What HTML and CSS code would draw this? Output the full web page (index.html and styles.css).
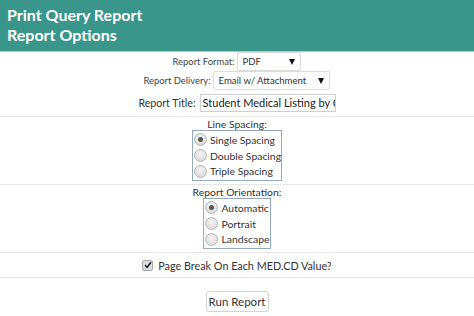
FILE: index.html
```html
<!DOCTYPE html>
<html>
<head>
<meta charset="utf-8">
<link rel="stylesheet" href="styles.css">
</head>
<body>
<header class="title-bar">
  <div>Print Query Report</div>
  <div>Report Options</div>
</header>

<section class="options">
  <div class="row">
    <label class="lbl">Report Format:</label>
    <span class="select w-format">PDF<span class="arrow"></span></span>
  </div>
  <div class="row">
    <label class="lbl">Report Delivery:</label>
    <span class="select w-delivery">Email w/ Attachment<span class="arrow"></span></span>
  </div>
  <div class="row row-title">
    <label class="lbl lbl-big">Report Title:</label>
    <span class="text-input">Student Medical Listing by Code</span>
  </div>
</section>

<section class="group">
  <div class="caption">Line Spacing:</div>
  <div class="box">
    <div class="opt"><span class="radio on"></span>Single Spacing</div>
    <div class="opt"><span class="radio"></span>Double Spacing</div>
    <div class="opt"><span class="radio"></span>Triple Spacing</div>
  </div>
</section>

<section class="group">
  <div class="caption">Report Orientation:</div>
  <div class="box">
    <div class="opt"><span class="radio on"></span>Automatic</div>
    <div class="opt"><span class="radio"></span>Portrait</div>
    <div class="opt"><span class="radio"></span>Landscape</div>
  </div>
</section>

<section class="check-row">
  <span class="check"><svg viewBox="0 0 10 10" width="8" height="8"><path d="M1.3 5.2 L3.8 7.8 L8.8 1.6" fill="none" stroke="#222" stroke-width="2"/></svg></span>
  <span>Page Break On Each MED.CD Value?</span>
</section>

<section class="actions">
  <button class="btn">Run Report</button>
</section>
</body>
</html>
```

FILE: styles.css
```css
html, body {
  margin: 0;
  padding: 0;
  background: #fff;
}
body {
  font-family: "Lato", "Open Sans", sans-serif;
  color: #333;
  font-size: 11px;
}
.title-bar {
  background: #3a958b;
  color: #fff;
  font-weight: bold;
  font-size: 16px;
  line-height: 20px;
  height: 52px;
  box-sizing: border-box;
  padding: 5px 7px 0;
  border-bottom: 1px solid #b9c4c3;
}
.options {
  display: flex;
  flex-direction: column;
  align-items: center;
  padding-bottom: 4px;
  border-bottom: 1px solid #e6e6e6;
}
.row {
  display: flex;
  align-items: center;
  height: 19px;
}
.row-title {
  margin-top: 4px;
  height: 18px;
}
.lbl {
  font-size: 9.4px;
  color: #444;
  margin-right: 3px;
}
.lbl-big {
  font-size: 10.6px;
  color: #333;
  margin-right: 4px;
}
.select {
  position: relative;
  display: flex;
  align-items: center;
  box-sizing: border-box;
  height: 19px;
  border: 1px solid #dcdcdc;
  border-radius: 2px;
  padding-left: 4px;
  font-size: 9.6px;
  color: #333;
  background: #fff;
}
.w-format { width: 64px; }
.w-delivery { width: 117px; }
.arrow {
  position: absolute;
  right: 5px;
  top: 6px;
  width: 0;
  height: 0;
  border-left: 3.5px solid transparent;
  border-right: 3.5px solid transparent;
  border-top: 6px solid #111;
}
.text-input {
  display: block;
  box-sizing: border-box;
  width: 136px;
  height: 18px;
  line-height: 16px;
  border: 1px solid #cfcfcf;
  padding-left: 2px;
  font-size: 11px;
  color: #222;
  white-space: nowrap;
  overflow: hidden;
}
.group {
  display: flex;
  flex-direction: column;
  align-items: center;
  padding-bottom: 3px;
  border-bottom: 1px solid #e6e6e6;
}
.caption {
  height: 13px;
  line-height: 14px;
  font-size: 10.4px;
  color: #333;
}
.box {
  border: 1px solid #94a9c4;
  padding: 1px 0 1px 1px;
  display: flex;
  flex-direction: column;
}
.opt {
  display: flex;
  align-items: center;
  height: 15.7px;
  font-size: 10.4px;
  color: #333;
  white-space: nowrap;
}
.radio {
  width: 11px;
  height: 11px;
  border-radius: 50%;
  border: 1px solid #b5b5b5;
  background: radial-gradient(circle at 50% 35%, #f4f4f4, #d6d6d6);
  margin-right: 3px;
  display: flex;
  align-items: center;
  justify-content: center;
  flex: none;
}
.radio.on::after {
  content: "";
  width: 5px;
  height: 5px;
  border-radius: 50%;
  background: #555;
}
.check-row {
  display: flex;
  align-items: center;
  justify-content: center;
  height: 24px;
  font-size: 10.8px;
  color: #333;
  border-bottom: 1px solid #e6e6e6;
  gap: 5px;
}
.check {
  width: 9px;
  height: 9px;
  border: 1px solid #aaa;
  border-radius: 2px;
  background: #ddd;
  display: flex;
  align-items: center;
  justify-content: center;
}
.actions {
  display: flex;
  justify-content: center;
  padding-top: 13px;
}
.btn {
  font-family: "Lato", "Open Sans", sans-serif;
  font-size: 11.5px;
  color: #333;
  background: #fff;
  border: 1px solid #d4d4d4;
  border-radius: 3px;
  width: 63px;
  height: 21px;
  padding: 0;
}
```
